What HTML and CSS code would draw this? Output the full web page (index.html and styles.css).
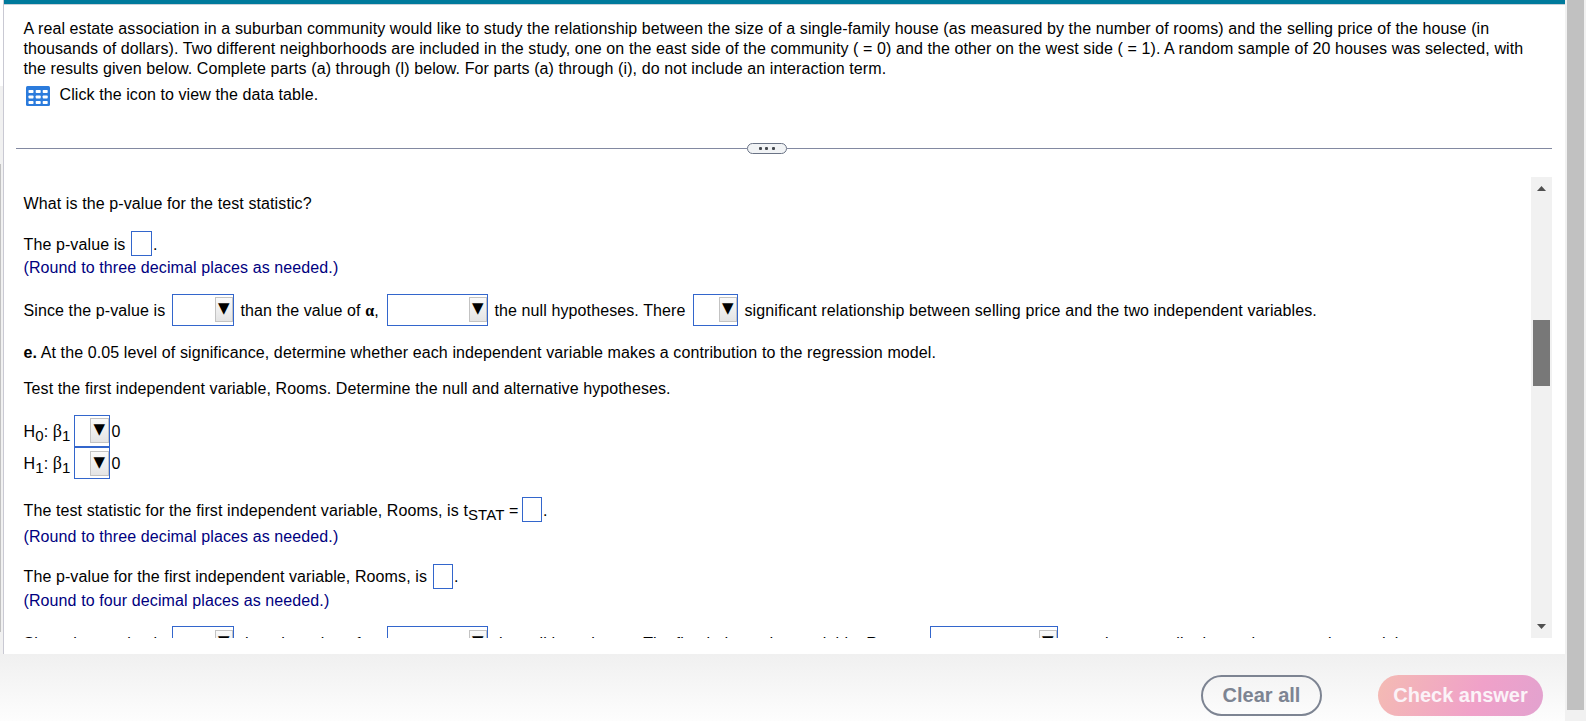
FILE: index.html
```html
<!DOCTYPE html>
<html lang="en">
<head>
    <meta charset="UTF-8">
    <meta name="viewport" content="width=device-width, initial-scale=1.0">
    <title>Homework Question</title>
    <link rel="stylesheet" href="styles.css">
</head>
<body>

    <div class="page">
        <div class="left-rail"><div class="rail-thumb"></div></div>

        <div class="main">
            <div class="top-bar"></div>

            <div class="content">
                <div class="intro">
                    <div class="line l1">A real estate association in a suburban community would like to study the relationship between the size of a single-family house (as measured by the number of rooms) and the selling price of the house (in</div>
                    <div class="line l2">thousands of dollars). Two different neighborhoods are included in the study, one on the east side of the community ( = 0) and the other on the west side ( = 1). A random sample of 20 houses was selected, with</div>
                    <div class="line l3">the results given below. Complete parts (a) through (l) below. For parts (a) through (i), do not include an interaction term.</div>
                    <div class="data-link">
                        <svg class="table-icon" width="24" height="20" viewBox="0 0 24 20">
                            <rect width="24" height="20" rx="1.5" fill="#2b7bdc"/>
                            <g fill="#fff">
                                <rect x="2.5" y="4" width="5" height="3" rx=".7"/><rect x="9.7" y="4" width="5" height="3" rx=".7"/><rect x="16.7" y="4" width="5" height="3" rx=".7"/>
                                <rect x="2.5" y="9.5" width="5" height="3" rx=".7"/><rect x="9.7" y="9.5" width="5" height="3" rx=".7"/><rect x="16.7" y="9.5" width="5" height="3" rx=".7"/>
                                <rect x="2.5" y="15" width="5" height="3" rx=".7"/><rect x="9.7" y="15" width="5" height="3" rx=".7"/><rect x="16.7" y="15" width="5" height="3" rx=".7"/>
                            </g>
                        </svg>
                        <span class="click-text">Click the icon to view the data table.</span>
                    </div>
                </div>

                <div class="divider">
                    <div class="rule rule-left"></div>
                    <div class="pill"><i></i><i></i><i></i></div>
                    <div class="rule"></div>
                </div>

                <div class="pane">
                    <div class="questions">
                        <div class="line what">What is the p-value for the test statistic?</div>

                        <div class="row pvalue"><span class="t1">The p-value is</span><span class="box wide"></span><span>.</span></div>
                        <div class="line hint h1">(Round to three decimal places as needed.)</div>

                        <div class="row since">
                            <span class="t2">Since the p-value is</span><span class="select s62"><b>▼</b></span>
                            <span class="t3">than the value of <em class="alpha">α</em>,</span><span class="select s101"><b>▼</b></span>
                            <span class="t4">the null hypotheses. There</span><span class="select s45"><b>▼</b></span>
                            <span class="t5">significant relationship between selling price and the two independent variables.</span>
                        </div>

                        <div class="line part-e"><strong>e.</strong> At the 0.05 level of significance, determine whether each independent variable makes a contribution to the regression model.</div>
                        <div class="line test">Test the first independent variable, Rooms. Determine the null and alternative hypotheses.</div>

                        <div class="row hyp first"><span class="t6">H<sub>0</sub>: <em>β</em><sub>1</sub></span><span class="select s36"><b>▼</b></span><span class="zero">0</span></div>
                        <div class="row hyp low"><span class="t6">H<sub>1</sub>: <em>β</em><sub>1</sub></span><span class="select s36"><b>▼</b></span><span class="zero">0</span></div>

                        <div class="row stat"><span class="t7">The test statistic for the first independent variable, Rooms, is t<sub>STAT</sub> =</span><span class="box"></span><span>.</span></div>
                        <div class="line hint h2">(Round to three decimal places as needed.)</div>

                        <div class="row pfirst"><span class="t8">The p-value for the first independent variable, Rooms, is</span><span class="box"></span><span>.</span></div>
                        <div class="line hint h3">(Round to four decimal places as needed.)</div>

                        <div class="row since last low">
                            <span class="t2">Since the p-value is</span><span class="select s62"><b>▼</b></span>
                            <span class="t3">than the value of <em class="alpha">α</em>,</span><span class="select s101"><b>▼</b></span>
                            <span class="t9">the null hypotheses. The first independent variable, Rooms,</span><span class="select s128"><b>▼</b></span>
                            <span class="t10">to make a contribution to the regression model.</span>
                        </div>
                    </div>

                    <div class="scrollbar">
                        <svg width="9" height="5" viewBox="0 0 9 5"><path d="M4.5 0 9 5H0z" fill="#505050"/></svg>
                        <div class="thumb"></div>
                        <svg width="9" height="5" viewBox="0 0 9 5"><path d="M0 0h9L4.5 5z" fill="#505050"/></svg>
                    </div>
                </div>
            </div>
        </div>

        <div class="page-scroll"><div class="page-thumb"></div></div>

        <div class="footer">
            <button class="btn clear">Clear all</button>
            <button class="btn check">Check answer</button>
        </div>
    </div>

</body>
</html>
```
FILE: styles.css
```css
* {
    box-sizing: border-box;
}

body {
    margin: 0;
    width: 1586px;
    height: 721px;
    overflow: hidden;
    background: #fff;
    color: #000;
    font-family: "Liberation Sans", Arial, sans-serif;
    font-size: 16px;
    line-height: 20px;
    letter-spacing: 0.105px;
}

.page {
    display: grid;
    grid-template-columns: 3px 1562px 21px;
    grid-template-rows: 654px 67px;
}

.left-rail {
    margin-top: 86px;
    padding-top: 78px;
    background: #f1f1f1;
}

.rail-thumb {
    width: 1px;
    height: 468px;
    background: #c1c1c1;
}

.main {
    height: 654px;
    border-left: 1px solid #c9c9d3;
    overflow: hidden;
}

.top-bar {
    height: 5px;
    background: #007a9c;
    border-bottom: 1px solid #c8d0d8;
}

.line,
.row {
    white-space: nowrap;
    text-indent: -0.5px;
}

/* Problem statement */
.intro {
    height: 138px;
    padding: 14px 0 0 20px;
}

.l2 {
    letter-spacing: 0.09px;
}

.l3 {
    letter-spacing: 0.1px;
}

.data-link {
    display: flex;
    margin-top: 6px;
    padding-left: 2px;
    letter-spacing: 0.09px;
}

.table-icon {
    margin-top: 1px;
}

.click-text {
    margin-left: 9.5px;
}

.divider {
    display: flex;
    align-items: center;
    width: 1536px;
    height: 11px;
    margin-left: 12px;
}

.rule {
    flex: 1;
    height: 1px;
    background: #8289a1;
}

.rule-left {
    flex: 0 0 731px;
}

.pill {
    display: flex;
    align-items: center;
    justify-content: center;
    gap: 3.5px;
    width: 40px;
    height: 11px;
    padding-right: 1px;
    border: 1px solid #6a7385;
    border-radius: 6px;
    background: #f1f3f5;
}

.pill i {
    width: 3px;
    height: 3px;
    border-radius: 1px;
    background: #45494f;
}

/* Scrolling question pane */
.pane {
    display: flex;
    width: 1548px;
    height: 461px;
    margin-top: 23px;
    overflow: hidden;
}

.questions {
    width: 1527px;
    height: 461px;
    padding: 17px 0 0 20px;
    overflow: hidden;
}

.row {
    display: flex;
    align-items: flex-start;
    height: 32px;
}

.row > span {
    flex-shrink: 0;
}

.row > span:not(.box):not(.select) {
    height: 20px;
    margin-top: 7px;
}

.row em {
    font-family: "Liberation Serif", "Times New Roman", serif;
    font-style: normal;
    font-size: 18px;
    line-height: 0;
}

.row .alpha {
    font-size: 16px;
    font-weight: bold;
}

.row sub {
    font-size: 15px;
    line-height: 0;
    vertical-align: -4px;
}

.box {
    width: 20px;
    height: 25px;
    border: 1px solid #36c;
}

.box.wide {
    width: 21px;
}

.box + span {
    padding-left: 1.5px;
}

.select {
    display: flex;
    justify-content: flex-end;
    height: 32px;
    padding-top: 2px;
    border: 1px solid #36c;
}

.low .select {
    padding-top: 3px;
}

.select b {
    width: 18px;
    height: 25px;
    border: 1px solid #c3c3c3;
    background: linear-gradient(#fafafa, #e4e4e4);
    font-family: "DejaVu Sans", sans-serif;
    font-size: 15px;
    font-weight: normal;
    line-height: 21px;
    text-align: center;
}

.s62 { width: 62px; }
.s101 { width: 101px; }
.s45 { width: 45px; }
.s36 { width: 36px; }
.s128 { width: 128px; }

.s36 b {
    width: 19px;
}

.t1 { width: 107px; }
.t2 { width: 148px; }
.t3 { width: 153px; padding-left: 7px; }
.t4 { width: 205px; padding-left: 7px; }
.t5 { padding-left: 7px; }
.t6 { width: 50px; }
.t7 { width: 498px; }
.t8 { width: 409px; }
.t9 { width: 442px; padding-left: 7px; }
.t10 { padding-left: 7px; }

.pvalue,
.stat,
.pfirst {
    height: 25px;
}

.pvalue {
    margin-top: 17px;
}

.row.pvalue > span:not(.box):not(.select),
.row.stat > span:not(.box):not(.select) {
    margin-top: 4px;
}

.row.pfirst > span:not(.box):not(.select) {
    margin-top: 3px;
}

.row.last > span:not(.box):not(.select) {
    margin-top: 8px;
}

.hint {
    color: #000080;
}

.h1 { margin-top: 2px; }
.h2 { margin-top: 5px; }
.h3 { margin-top: 2px; }

.since {
    margin-top: 16px;
}

.part-e {
    margin-top: 17px;
}

.test {
    margin-top: 16px;
}

.first {
    margin-top: 16px;
}

.zero {
    padding-left: 2px;
}

.stat {
    margin-top: 18px;
}

.pfirst {
    margin-top: 17px;
}

.last {
    margin-top: 15px;
}

.scrollbar {
    display: flex;
    flex-direction: column;
    align-items: center;
    width: 21px;
    height: 461px;
    padding: 9px 0 9px;
    background: #f1f1f1;
}

.thumb {
    width: 17px;
    height: 66px;
    margin: 129px 0 238px;
    background: #787878;
}

.page-scroll {
    grid-row: span 2;
    padding-left: 2px;
    background: #f1f1f1;
}

.page-thumb {
    width: 17px;
    height: 710px;
    background: #c1c1c1;
}

/* Bottom buttons */
.footer {
    display: flex;
    grid-column: 1 / 3;
    grid-row: 2;
    justify-content: flex-end;
    gap: 56px;
    padding: 21px 22px 0 0;
    background: linear-gradient(#f0f0f0, #fdfdfd);
}

.btn {
    height: 41px;
    padding: 0;
    border: none;
    border-radius: 21px;
    font-family: inherit;
    font-size: 20px;
    font-weight: bold;
}

.clear {
    width: 121px;
    border: 2px solid #7d8492;
    background: transparent;
    color: #7d8492;
}

.check {
    width: 165px;
    background: linear-gradient(110deg, #f4bbb3, #f0a1c9 60%, #e2a2cf);
    color: #fbf3f8;
}
```
